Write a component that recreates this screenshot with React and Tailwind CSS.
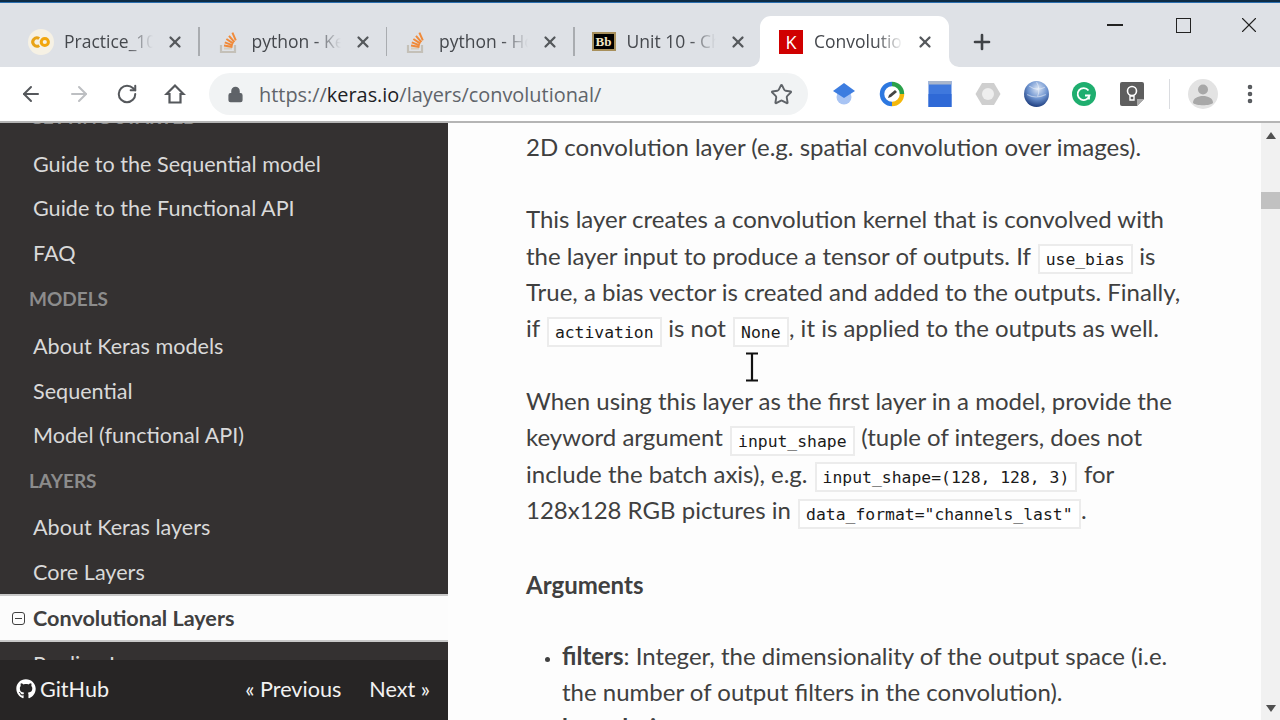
import React from "react";
import { FaGithub } from "react-icons/fa";
import { ArrowLeft, ArrowRight, RotateCw, Lock, Star, X, Plus, MoreVertical } from "lucide-react";

const ColabIcon = () => (
  <svg width="26" height="26" viewBox="0 0 26 26" className="shrink-0">
    <circle cx="13" cy="13" r="13" fill="#f6f1e4" />
    <path d="M11.2 9.6a4.1 4.1 0 1 0 0 6.8" fill="none" stroke="#e8a317" strokeWidth="3" />
    <circle cx="16.8" cy="13" r="3.6" fill="none" stroke="#f2a60c" strokeWidth="3" />
  </svg>
);

const StackIcon = () => (
  <svg width="20" height="24" viewBox="0 0 20 24" className="shrink-0">
    <path d="M2 15v7h14v-7" fill="none" stroke="#c4c0b8" strokeWidth="2.2" />
    <path d="M5 18.5h8" stroke="#d8cdbd" strokeWidth="2" />
    <path d="M5 15.5l8.5 1.4M5.8 12.4l8 3M7.4 9l7 4.6M10 5.8l5.4 6.4M13.4 2.6l3.4 7.8" stroke="#f08a3a" strokeWidth="2" fill="none" />
  </svg>
);

const BbIcon = () => (
  <div className="w-[24px] h-[19px] bg-black border-2 border-[#a8905c] text-[#f1e5c4] text-[13px] leading-[15px] font-bold text-center font-['Liberation_Serif',serif] shrink-0">Bb</div>
);

const KIcon = () => (
  <div className="w-[24px] h-[24px] bg-[#d00000] text-white text-[18px] leading-[24px] text-center font-['Open_Sans',sans-serif] shrink-0">K</div>
);

const Tab = ({ icon, label, active, sep }) => (
  <div className={`relative h-[51px] flex items-center shrink-0 ${active ? "w-[189px] -ml-[2px] bg-white rounded-t-[11px] pl-[18px]" : "w-[187.5px] pl-[16px]"}`}>
    {active && (
      <svg width="10" height="10" viewBox="0 0 10 10" className="absolute -left-[10px] bottom-0">
        <path d="M10 0v10H0A10 10 0 0 0 10 0z" fill="#ffffff" />
      </svg>
    )}
    {active && (
      <svg width="10" height="10" viewBox="0 0 10 10" className="absolute -right-[10px] bottom-0">
        <path d="M0 0v10h10A10 10 0 0 1 0 0z" fill="#ffffff" />
      </svg>
    )}
    <div className="w-[26px] flex justify-center shrink-0">{icon}</div>
    <div className="ml-[10px] w-[89px] overflow-hidden whitespace-nowrap text-[17.5px] text-[#45484d] font-['Open_Sans',sans-serif] [mask-image:linear-gradient(to_right,black_70%,transparent_100%)]">{label}</div>
    <X size={18} strokeWidth={3} className="ml-[13px] text-[#55585c] shrink-0" />
    {sep && <div className="absolute right-0 top-[11px] h-[29px] w-[1.5px] bg-[#a9acb0]" />}
  </div>
);

const Ext = ({ children }) => <div className="w-[48px] flex justify-center items-center shrink-0">{children}</div>;

const Item = ({ children }) => (
  <div className="h-[44.7px] flex items-center pl-[33px] text-[21.6px] text-[#d9d9d9] whitespace-nowrap shrink-0">{children}</div>
);

const Caption = ({ children }) => (
  <div className="h-[48px] flex items-center pl-[29px] text-[19px] font-bold text-[#8c8c8c] whitespace-nowrap shrink-0">{children}</div>
);

const Code = ({ children }) => (
  <code className="font-['DejaVu_Sans_Mono',monospace] text-[16.4px] leading-[20px] text-[#1a1a1a] bg-white border-2 border-[#ececec] px-[6px] py-[3.5px] ml-[1px] mr-[0.5px] whitespace-nowrap">{children}</code>
);

export default function App() {
  return (
    <div className="w-[1280px] h-[720px] overflow-hidden relative flex flex-col font-['Lato',sans-serif] bg-[#fdfdfd]">
      <div className="h-[3px] bg-[#0d2b45] border-b border-[#2a6fb0] shrink-0" />
      <div className="h-[64px] bg-[#dee1e6] shrink-0 relative flex flex-col justify-end">
        <div className="flex items-center pl-[12px]">
          <Tab icon={<ColabIcon />} label="Practice_10" sep />
          <Tab icon={<StackIcon />} label="python - Keras" sep />
          <Tab icon={<StackIcon />} label="python - How" sep />
          <Tab icon={<BbIcon />} label="Unit 10 - Chapter" />
          <Tab active icon={<KIcon />} label="Convolutional" />
          <Plus size={24} strokeWidth={2.6} className="ml-[21px] text-[#3f4246]" />
        </div>
        <div className="absolute top-[9px] right-0 flex items-center">
          <div className="w-[69px] flex justify-center"><div className="w-[16px] h-[1.5px] bg-[#222]" /></div>
          <div className="w-[69px] flex justify-center"><div className="w-[15px] h-[15px] border border-[#222]" /></div>
          <div className="w-[62px] flex justify-center"><X size={26} strokeWidth={1} className="text-[#222]" /></div>
        </div>
      </div>
      <div className="h-[54px] bg-white shrink-0 flex items-center border-b-2 border-[#b5b5b5] pl-[7px] box-content">
        <div className="w-[48px] flex justify-center"><ArrowLeft size={24} strokeWidth={2} className="text-[#55585c]" /></div>
        <div className="w-[48px] flex justify-center"><ArrowRight size={24} strokeWidth={2} className="text-[#bdbfc2]" /></div>
        <div className="w-[48px] flex justify-center"><RotateCw size={22} strokeWidth={2.2} className="text-[#55585c]" /></div>
        <div className="w-[48px] flex justify-center">
          <svg width="22" height="22" viewBox="0 0 22 22">
            <path d="M11 2.5L2.5 11H5.5V19.5H16.5V11H19.5z" fill="none" stroke="#55585c" strokeWidth="2.2" strokeLinejoin="miter" />
          </svg>
        </div>
        <div className="ml-[10px] w-[599px] h-[42px] rounded-full bg-[#f1f3f4] flex items-center pl-[18px]">
          <Lock size={17} fill="#5f6368" strokeWidth={2} className="text-[#5f6368]" />
          <div className="ml-[15px] pt-[1px] text-[19.9px] text-[#60646a] font-['Open_Sans',sans-serif] whitespace-nowrap">https://<span className="text-[#202124]">keras.io</span>/layers/convolutional/</div>
          <Star size={23} strokeWidth={2} className="ml-auto mr-[15px] text-[#5f6368]" />
        </div>
        <div className="ml-[12px] flex items-center">
          <Ext>
            <svg width="26" height="28" viewBox="0 0 26 28">
              <circle cx="13" cy="17" r="7.5" fill="#a8c4f4" />
              <path d="M13 3l11 8-11 7-11-7z" fill="#3d7de0" />
            </svg>
          </Ext>
          <Ext>
            <svg width="26" height="26" viewBox="0 0 26 26">
              <path d="M13 3a10 10 0 0 1 10 10" fill="none" stroke="#2aa14b" strokeWidth="4.5" />
              <path d="M23 13a10 10 0 0 1-10 10" fill="none" stroke="#f4b80c" strokeWidth="4.5" />
              <path d="M13 23a10 10 0 0 1 0-20" fill="none" stroke="#2d78e0" strokeWidth="4.5" />
              <path d="M9 17l1-3 6-5 2 2-6 5z" fill="#444" />
            </svg>
          </Ext>
          <Ext>
            <svg width="24" height="26" viewBox="0 0 24 26">
              <rect x="0.5" y="0" width="23" height="26" fill="#3f78dd" />
              <rect x="0.5" y="0" width="23" height="3.5" fill="#a9b6cc" />
              <path d="M0.5 13h23v13h-23z" fill="#2f69d6" />
            </svg>
          </Ext>
          <Ext>
            <svg width="26" height="24" viewBox="0 0 26 24">
              <path d="M7 1h12l6.5 11L19 23H7L0.5 12z" fill="#cfcfcf" />
              <circle cx="13" cy="12" r="6" fill="#eeeeee" />
            </svg>
          </Ext>
          <Ext>
            <svg width="25" height="26" viewBox="0 0 24 25">
              <defs>
                <radialGradient id="gl" cx="55%" cy="30%" r="70%">
                  <stop offset="0%" stopColor="#dbe6f6" />
                  <stop offset="55%" stopColor="#6d93cf" />
                  <stop offset="100%" stopColor="#1f3f80" />
                </radialGradient>
              </defs>
              <ellipse cx="12" cy="12.5" rx="12" ry="12.5" fill="url(#gl)" />
              <path d="M12 1c3 5 3 9 1 14M5 5c4 3 9 4 15 1M3 13c5 3 12 3 18 0" fill="none" stroke="#ffffff" strokeOpacity="0.45" strokeWidth="1" />
            </svg>
          </Ext>
          <Ext>
            <svg width="24" height="24" viewBox="0 0 24 24">
              <circle cx="12" cy="12" r="12" fill="#1fae6f" />
              <path d="M16.5 8.5a6 6 0 1 0 1 5h-4.5m4 0v4" fill="none" stroke="#fff" strokeWidth="1.8" />
            </svg>
          </Ext>
          <Ext>
            <svg width="24" height="24" viewBox="0 0 24 24">
              <path d="M2 0h20a2 2 0 0 1 2 2v15l-7 7H2a2 2 0 0 1-2-2V2a2 2 0 0 1 2-2z" fill="#5e5e5e" />
              <path d="M17 24v-7h7z" fill="#a9a9a9" />
              <circle cx="12" cy="9" r="4.5" fill="none" stroke="#fff" strokeWidth="1.6" />
              <path d="M10 14h4v4h-4z" fill="none" stroke="#fff" strokeWidth="1.4" />
            </svg>
          </Ext>
        </div>
        <div className="ml-[13px] w-px h-[30px] bg-[#dadce0]" />
        <div className="ml-[18px] w-[30px] h-[30px] rounded-full bg-[#e3e3e3] flex items-center justify-center overflow-hidden">
          <svg width="30" height="30" viewBox="0 0 30 30">
            <circle cx="15" cy="10.5" r="5" fill="#a8a8a8" />
            <path d="M5 24c0-5 5-7 10-7s10 2 10 7c-3 3-17 3-20 0z" fill="#a8a8a8" />
          </svg>
        </div>
        <div className="ml-[17px] w-[30px] flex justify-center"><MoreVertical size={24} strokeWidth={2.6} className="text-[#55585c]" /></div>
      </div>

      <div className="flex-1 min-h-0 flex">
        <div className="w-[448px] shrink-0 flex flex-col bg-[#343131]">
          <div className="flex-1 min-h-0 overflow-hidden">
            <div className="-mt-[29.4px] flex flex-col">
              <Caption>GETTING STARTED</Caption>
              <Item>Guide to the Sequential model</Item>
              <Item>Guide to the Functional API</Item>
              <Item>FAQ</Item>
              <Caption>MODELS</Caption>
              <Item>About Keras models</Item>
              <Item>Sequential</Item>
              <Item>Model (functional API)</Item>
              <div className="h-[47px] flex items-center pl-[29px] text-[19px] font-bold text-[#8c8c8c] whitespace-nowrap shrink-0">LAYERS</div>
              <Item>About Keras layers</Item>
              <Item>Core Layers</Item>
              <div className="h-[48px] bg-[#fcfcfc] border-y-2 border-[#c9c9c9] flex items-center pl-[12px] shrink-0">
                <div className="w-[13px] h-[13px] border border-[#404040] rounded-[3px] flex items-center justify-center">
                  <div className="w-[7px] h-px bg-[#404040]" />
                </div>
                <span className="ml-[8px] text-[21.6px] font-bold text-[#404040]">Convolutional Layers</span>
              </div>
              <Item>Pooling Layers</Item>
            </div>
          </div>
          <div className="h-[60px] bg-[#272525] shrink-0 flex items-center pl-[16px] pr-[18px] pb-[2px] text-[21.6px] text-[#f2f2f2]">
            <FaGithub size={20} className="text-white" />
            <span className="ml-[4px]">GitHub</span>
            <span className="ml-auto">« Previous</span>
            <span className="ml-[28px]">Next »</span>
          </div>
        </div>

        <div className="flex-1 min-w-0 overflow-hidden pl-[78px] pr-[76px] pt-[6px] text-[24px] leading-[36.4px] text-[#404040]">
          <p className="whitespace-nowrap">2D convolution layer (e.g. spatial convolution over images).</p>
          <p className="mt-[36px] whitespace-nowrap leading-[36.2px]">This layer creates a convolution kernel that is convolved with<br />the layer input to produce a tensor of outputs. If <Code>use_bias</Code> is<br />True, a bias vector is created and added to the outputs. Finally,<br />if <Code>activation</Code> is not <Code>None</Code>, it is applied to the outputs as well.</p>
          <p className="mt-[36.8px] whitespace-nowrap">When using this layer as the first layer in a model, provide the<br />keyword argument <Code>input_shape</Code> (tuple of integers, does not<br />include the batch axis), e.g. <Code>input_shape=(128, 128, 3)</Code> for<br />128x128 RGB pictures in <Code>data_format="channels_last"</Code>.</p>
          <h3 className="mt-[38px] font-bold text-[24px]">Arguments</h3>
          <ul className="mt-[35px] list-disc pl-[36px] whitespace-nowrap marker:text-[15px]">
            <li><b>filters</b>: Integer, the dimensionality of the output space (i.e.<br />the number of output filters in the convolution).</li>
            <li className="-mt-[1px]"><b>kernel_size</b>: An integer or tuple/list of 2 integers, specifying</li>
          </ul>
        </div>

        <div className="w-[19px] shrink-0 bg-[#f1f1f1] flex flex-col items-center pt-[9px]">
          <div className="w-0 h-0 border-x-[5.5px] border-x-transparent border-b-[7px] border-b-[#505050]" />
          <div className="mt-[53px] w-full h-[17px] bg-[#c1c1c1]" />
          <div className="mt-auto mb-[8px] w-0 h-0 border-x-[5.5px] border-x-transparent border-t-[7px] border-t-[#505050]" />
        </div>
      </div>

      <svg width="16" height="30" viewBox="0 0 16 30" className="absolute left-[744px] top-[352px]">
        <path d="M2 1.5h12M8 1.5v27M2 28.5h12" stroke="#111" strokeWidth="2.2" fill="none" />
      </svg>
    </div>
  );
}
